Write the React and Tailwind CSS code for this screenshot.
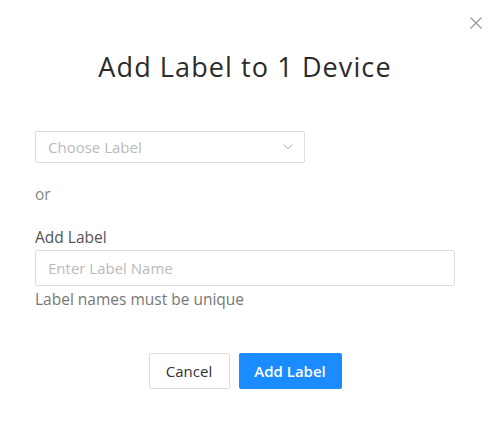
import React from 'react';

export default function App() {
  return (
    <div className="relative w-[496px] h-[433px] bg-white font-['Open_Sans',sans-serif]">
      <button className="absolute left-[470px] top-[17px] w-[12px] h-[12px] text-[#999]">
        <svg viewBox="0 0 12 12" className="w-[12px] h-[12px]" fill="none" stroke="currentColor" strokeWidth="1.3">
          <path d="M0.5 0.5 L11.5 11.5 M11.5 0.5 L0.5 11.5" />
        </svg>
      </button>

      <div className="w-[420px] ml-[35px] pt-[49px]">
        <h2 className="text-center text-[27px] leading-[36px] font-medium tracking-[1.1px] text-[#2b2b2b]">
          Add Label to 1 Device
        </h2>

        {/* Choose existing label */}
        <div className="mt-[46px] w-[270px] h-[32px] border border-[#dcdcdc] rounded-[2px] flex items-center justify-between pl-[12px] pr-[11px]">
          <span className="text-[15px] text-[#bbb]">Choose Label</span>
          <svg viewBox="0 0 10 6" className="w-[10px] h-[6px]" fill="none" stroke="#aaa" strokeWidth="1">
            <path d="M0.5 0.5 L5 5 L9.5 0.5" />
          </svg>
        </div>

        <p className="mt-[20px] text-[15.5px] leading-[22px] text-[#888]">or</p>

        {/* New label */}
        <label className="block mt-[21px] text-[15.5px] leading-[22px] text-[#555]">Add Label</label>
        <input
          type="text"
          placeholder="Enter Label Name"
          className="block mt-[2px] w-[420px] h-[36px] border border-[#dcdcdc] rounded-[2px] px-[12px] text-[15px] text-[#333] placeholder:text-[#bbb] outline-none"
        />
        <p className="mt-[2px] text-[15.5px] leading-[22px] text-[#777]">Label names must be unique</p>

        <div className="mt-[43px] flex justify-center gap-[9px]">
          <button className="w-[81px] h-[36px] border border-[#dcdcdc] rounded-[2px] bg-white text-[15px] text-[#333]">
            Cancel
          </button>
          <button className="w-[103px] h-[36px] rounded-[2px] bg-[#1a8cff] text-[15px] font-semibold text-white">
            Add Label
          </button>
        </div>
      </div>
    </div>
  );
}
